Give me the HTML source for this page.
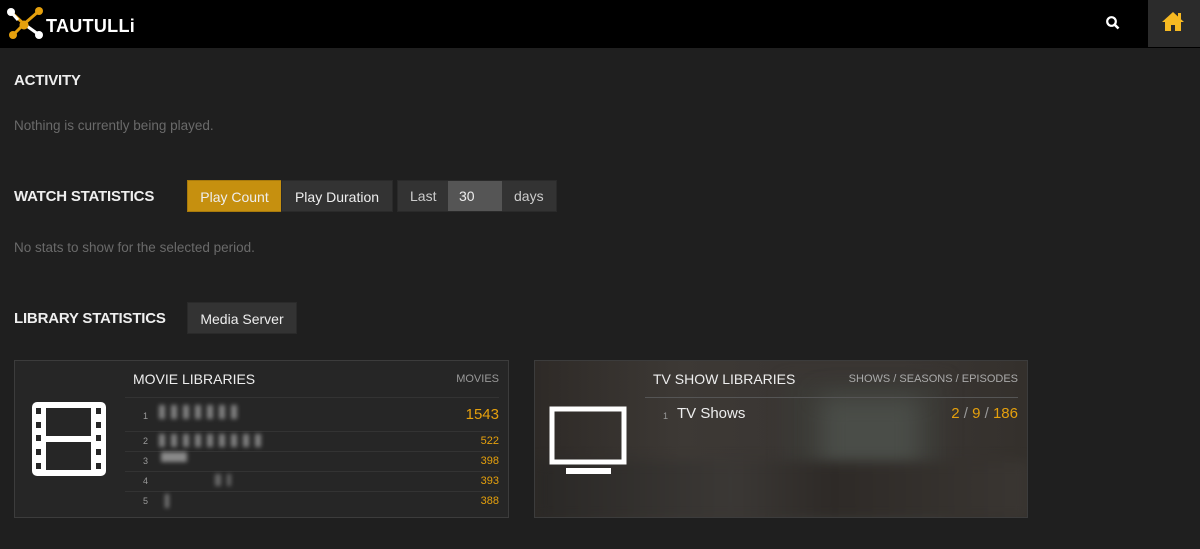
<!DOCTYPE html>
<html><head><style>
*{box-sizing:border-box;margin:0;padding:0}
body{width:1200px;height:549px;background:#1f1f1f;font-family:"Liberation Sans",sans-serif;color:#eee;position:relative;overflow:hidden}
.abs{position:absolute}
.nav{left:0;top:0;width:1200px;height:48px;background:#000}
h3{position:absolute;font-size:15px;font-weight:bold;color:#eee;letter-spacing:-0.2px}
.muted{position:absolute;font-size:13.5px;color:#6a6a6a}
.btn{position:absolute;height:32px;line-height:32px;font-size:14px;text-align:center;color:#eee;background:#333;border:1px solid #2a2a2a}
.card{position:absolute;border:1px solid #3c3c3c}
.row{position:absolute;left:110px;right:9px;border-top:1px solid #333;font-size:11px}
.num{position:absolute;right:0;color:#e5a00d}
.idx{position:absolute;left:18px;color:#999;font-size:9px}
.blur{position:absolute;filter:blur(2px);opacity:.8;background:repeating-linear-gradient(90deg,#ccc 0 6px,transparent 6px 12px)}
</style></head><body>
<div class="abs nav"></div>
<svg class="abs" style="left:6px;top:6px" width="40" height="36" viewBox="0 0 40 36">
<g stroke-width="3" fill="none"><path d="M5 6 L18 18 L8 28" stroke="#e5a00d"/><path d="M18 18 L33 5" stroke="#e5a00d"/><path d="M18 18 L32 28" stroke="#fff"/><path d="M5 6 L12 14" stroke="#fff"/></g>
<circle cx="5" cy="6" r="4" fill="#fff"/><circle cx="33" cy="5" r="4" fill="#e5a00d"/><circle cx="18" cy="19" r="4.5" fill="#e5a00d"/><circle cx="7" cy="29" r="4" fill="#e5a00d"/><circle cx="33" cy="29" r="4" fill="#fff"/></svg>
<div class="abs" style="left:46px;top:16px;font-size:18px;font-weight:bold;color:#fff;letter-spacing:0.3px">TAUTULLi</div>
<svg class="abs" style="left:1105px;top:15px" width="16" height="16" viewBox="0 0 16 16"><circle cx="6.5" cy="6.5" r="4.3" stroke="#fff" stroke-width="2.2" fill="none"/><path d="M9.5 9.5 L13.5 13.5" stroke="#fff" stroke-width="2.6"/></svg>
<div class="abs" style="left:1148px;top:0;width:52px;height:47px;background:#2b2b2b"></div>
<svg class="abs" style="left:1161px;top:11px" width="24" height="21" viewBox="0 0 24 21"><path d="M12 1 L1 11 L4 11 L4 20 L10 20 L10 14 L14 14 L14 20 L20 20 L20 11 L23 11 Z" fill="#f6b922"/><rect x="17" y="2" width="3" height="6" fill="#f6b922"/></svg>
<h3 style="left:14px;top:72px">ACTIVITY</h3>
<div class="muted" style="left:14px;top:118px">Nothing is currently being played.</div>
<h3 style="left:14px;top:188px">WATCH STATISTICS</h3>
<div class="btn" style="left:187px;top:180px;width:95px;background:#c6900f;border-color:#a87a0c">Play Count</div>
<div class="btn" style="left:281px;top:180px;width:112px">Play Duration</div>
<div class="btn" style="left:397px;top:180px;width:160px;background:#333"></div>
<div class="abs" style="left:410px;top:188px;font-size:14px;color:#ccc">Last</div>
<div class="abs" style="left:448px;top:181px;width:54px;height:30px;background:#555"></div>
<div class="abs" style="left:459px;top:188px;font-size:14px;color:#eee">30</div>
<div class="abs" style="left:514px;top:188px;font-size:14px;color:#ccc">days</div>
<div class="muted" style="left:14px;top:240px">No stats to show for the selected period.</div>
<h3 style="left:14px;top:310px">LIBRARY STATISTICS</h3>
<div class="btn" style="left:187px;top:302px;width:110px">Media Server</div>

<div class="card" style="left:14px;top:360px;width:495px;height:158px;background:#262626">
<svg class="abs" style="left:14px;top:38px" width="80" height="80" viewBox="0 0 80 80"><rect x="3" y="3" width="74" height="74" rx="5" fill="#fff"/><rect x="17" y="9" width="45" height="28" fill="#262626"/><rect x="17" y="43" width="45" height="28" fill="#262626"/><g fill="#262626"><rect x="7" y="9" width="5" height="6"/><rect x="7" y="23" width="5" height="6"/><rect x="7" y="36" width="5" height="6"/><rect x="7" y="50" width="5" height="6"/><rect x="7" y="64" width="5" height="6"/><rect x="67" y="9" width="5" height="6"/><rect x="67" y="23" width="5" height="6"/><rect x="67" y="36" width="5" height="6"/><rect x="67" y="50" width="5" height="6"/><rect x="67" y="64" width="5" height="6"/></g></svg>
<div class="abs" style="left:118px;top:10px;font-size:14px;color:#eee">MOVIE LIBRARIES</div>
<div class="abs" style="right:9px;top:12px;font-size:11px;color:#999">MOVIES</div>
<div class="row" style="top:36px;height:34px"><span class="idx" style="top:13px">1</span><span class="num" style="top:8px;font-size:15px">1543</span><div class="blur" style="left:34px;top:7px;width:78px;height:14px;opacity:.55"></div></div>
<div class="row" style="top:70px;height:20px"><span class="idx" style="top:4px">2</span><span class="num" style="top:3px">522</span><div class="blur" style="left:34px;top:2px;width:106px;height:13px;opacity:.55"></div></div>
<div class="row" style="top:90px;height:20px"><span class="idx" style="top:4px">3</span><span class="num" style="top:3px">398</span><div class="blur" style="left:36px;top:0;width:26px;height:10px;opacity:.6;background:#ccc"></div></div>
<div class="row" style="top:110px;height:20px"><span class="idx" style="top:4px">4</span><span class="num" style="top:3px">393</span><div class="blur" style="left:90px;top:2px;width:16px;height:12px;opacity:.4"></div></div>
<div class="row" style="top:130px;height:20px"><span class="idx" style="top:4px">5</span><span class="num" style="top:3px">388</span><div class="blur" style="left:40px;top:2px;width:4px;height:14px;opacity:.5;background:#ccc"></div></div>
</div>

<div class="card" style="left:534px;top:360px;width:494px;height:158px;overflow:hidden;background:linear-gradient(90deg,#2e2a27 0%,#3d3935 30%,#3a3633 50%,#3a3633 75%,#34302c 100%)">
<div class="abs" style="left:250px;top:20px;width:160px;height:150px;background:#3b3a36;filter:blur(8px)"></div>
<div class="abs" style="left:285px;top:35px;width:100px;height:90px;background:#4a4d48;filter:blur(12px)"></div>
<div class="abs" style="left:0;top:100px;width:494px;height:58px;background:linear-gradient(90deg,#2a2826,#3b3835 40%,#2e2a27 60%,#3a3632);filter:blur(6px)"></div>
<svg class="abs" style="left:14px;top:45px" width="80" height="70" viewBox="0 0 80 70"><rect x="3" y="3" width="72" height="53" fill="none" stroke="#fff" stroke-width="5"/><rect x="17" y="62" width="45" height="6" fill="#fff"/></svg>
<div class="abs" style="left:118px;top:10px;font-size:14px;color:#eee">TV SHOW LIBRARIES</div>
<div class="abs" style="right:9px;top:12px;font-size:11px;color:#aaa">SHOWS / SEASONS / EPISODES</div>
<div class="abs" style="left:110px;right:9px;top:36px;height:34px;border-top:1px solid #555"><span class="abs" style="left:18px;top:13px;font-size:9px;color:#999">1</span><span class="abs" style="left:32px;top:7px;font-size:15px;color:#eee">TV Shows</span><span class="abs" style="right:0;top:7px;font-size:15px;color:#e5a00d">2 <span style="color:#999">/</span> 9 <span style="color:#999">/</span> 186</span></div>
</div>
</body></html>
